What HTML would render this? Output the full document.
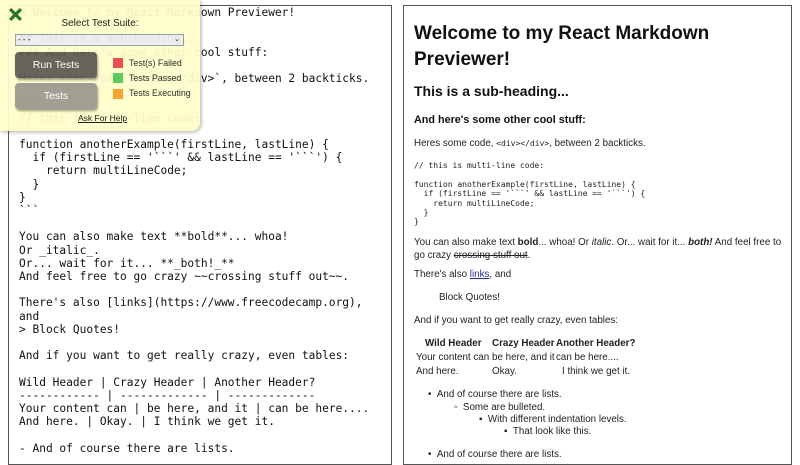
<!DOCTYPE html>
<html><head><meta charset="utf-8"><style>
*{margin:0;padding:0;box-sizing:border-box}
body{width:800px;height:450px;overflow:hidden;background:#fff;position:relative;font-family:"Liberation Sans",sans-serif;color:#111}
#ed{position:absolute;left:8px;top:5px;width:384px;height:460px;border:1px solid #555;overflow:hidden}
#ed pre{position:absolute;left:10px;top:0px;font-family:"DejaVu Sans Mono",monospace;font-size:11.2px;line-height:13.2px;white-space:pre-wrap;width:370px;color:#111}
#pv{position:absolute;left:403px;top:5px;width:389px;height:460px;border:1px solid #555;overflow:hidden}
.a{position:absolute;white-space:nowrap}
.p{font-size:9.8px;color:#222}
.c{font-family:"DejaVu Sans Mono",monospace;font-size:8px;color:#222}
#pop{position:absolute;left:0;top:0;width:200px;height:131px;background:#fdfdca;border-radius:0 0 8px 0;box-shadow:1px 1px 4px rgba(0,0,0,.35);opacity:.94}
.btn{position:absolute;left:15px;width:82px;height:26px;border-radius:4px;color:#fff;font-size:10.5px;text-align:center;line-height:26px;box-shadow:1px 2px 2px rgba(0,0,0,.4)}
.sq{position:absolute;left:113px;width:10px;height:10px}
.lg{position:absolute;left:129px;font-size:8.8px;color:#222}
</style></head><body>
<div id="ed"><pre># Welcome to my React Markdown Previewer!

## This is a sub-heading...
### And here's some other cool stuff:

Heres some code, &#96;&lt;div&gt;&lt;/div&gt;&#96;, between 2 backticks.

&#96;&#96;&#96;
// this is multi-line code:

function anotherExample(firstLine, lastLine) {
  if (firstLine == '&#96;&#96;&#96;' &amp;&amp; lastLine == '&#96;&#96;&#96;') {
    return multiLineCode;
  }
}
&#96;&#96;&#96;

You can also make text **bold**... whoa!
Or _italic_.
Or... wait for it... **_both!_**
And feel free to go crazy ~~crossing stuff out~~.

There's also [links](https://www.freecodecamp.org),
and
&gt; Block Quotes!

And if you want to get really crazy, even tables:

Wild Header | Crazy Header | Another Header?
------------ | ------------- | -------------
Your content can | be here, and it | can be here....
And here. | Okay. | I think we get it.

- And of course there are lists.</pre></div>
<div id="pv">
<div class="a" style="left:10px;top:15px;font-size:19px;font-weight:bold;line-height:26px;color:#111">Welcome to my React Markdown<br>Previewer!</div>
<div class="a" style="left:10px;top:77px;font-size:14px;font-weight:bold">This is a sub-heading...</div>
<div class="a" style="left:10px;top:108px;font-size:10.8px;font-weight:bold">And here's some other cool stuff:</div>
<div class="a p" style="left:10px;top:132px">Heres some code, <span class="c">&lt;div&gt;&lt;/div&gt;</span>, between 2 backticks.</div>
<div class="a c" style="left:10px;top:155px">// this is multi-line code:</div>
<div class="a c" style="left:10px;top:174px;line-height:9.3px;white-space:pre">function anotherExample(firstLine, lastLine) {
  if (firstLine == '&#96;&#96;&#96;' &amp;&amp; lastLine == '&#96;&#96;&#96;') {
    return multiLineCode;
  }
}</div>
<div class="a p" style="left:10px;top:230px;line-height:13px">You can also make text <b>bold</b>... whoa! Or <i>italic</i>. Or... wait for it... <b><i>both!</i></b> And feel free to<br>go crazy <s>crossing stuff out</s>.</div>
<div class="a p" style="left:10px;top:263px">There's also <u style="color:#2a2aa0">links</u>, and</div>
<div class="a p" style="left:35px;top:286px">Block Quotes!</div>
<div class="a p" style="left:10px;top:309px">And if you want to get really crazy, even tables:</div>
<div class="a p" style="left:21px;top:332px;font-weight:bold">Wild Header</div>
<div class="a p" style="left:88px;top:332px;font-weight:bold">Crazy Header</div>
<div class="a p" style="left:152px;top:332px;font-weight:bold">Another Header?</div>
<div class="a p" style="left:12px;top:346px">Your content can</div>
<div class="a p" style="left:88px;top:346px">be here, and it</div>
<div class="a p" style="left:152px;top:346px">can be here....</div>
<div class="a p" style="left:12px;top:360px">And here.</div>
<div class="a p" style="left:88px;top:360px">Okay.</div>
<div class="a p" style="left:158px;top:360px">I think we get it.</div>
<div class="a p" style="left:24px;top:383px">•&nbsp;&nbsp;And of course there are lists.</div>
<div class="a p" style="left:50px;top:396px">◦&nbsp;&nbsp;Some are bulleted.</div>
<div class="a p" style="left:75px;top:408px">▪&nbsp;&nbsp;With different indentation levels.</div>
<div class="a p" style="left:100px;top:420px">▪&nbsp;&nbsp;That look like this.</div>
<div class="a p" style="left:24px;top:443px">•&nbsp;&nbsp;And of course there are lists.</div>
</div>
<div id="pop">
<svg style="position:absolute;left:8px;top:7px" width="15" height="15" viewBox="0 0 14 14"><path d="M2 2L12 12M12 2L2 12" stroke="#1d6b1d" stroke-width="3"/></svg>
<div class="a" style="left:0;width:200px;text-align:center;top:18px;font-size:10px;color:#111">Select Test Suite:</div>
<div class="a" style="left:15px;top:34px;width:169px;height:12px;border:1px solid #999;background:#eee;font-size:8px;line-height:10px;padding-left:2px">- - -<span style="position:absolute;right:3px;top:0;font-size:7px">⌄</span></div>
<div class="btn" style="top:52px;background:#5f5b52">Run Tests</div>
<div class="btn" style="top:83px;background:#9b9a8c">Tests</div>
<div class="sq" style="top:58px;background:#ee4444"></div>
<div class="sq" style="top:73px;background:#55cc55"></div>
<div class="sq" style="top:89px;background:#f5a020"></div>
<div class="lg" style="top:58px">Test(s) Failed</div>
<div class="lg" style="top:73px">Tests Passed</div>
<div class="lg" style="top:88px">Tests Executing</div>
<div class="a" style="left:78px;top:113px;font-size:8.5px;text-decoration:underline">Ask For Help</div>
</div>
</body></html>
